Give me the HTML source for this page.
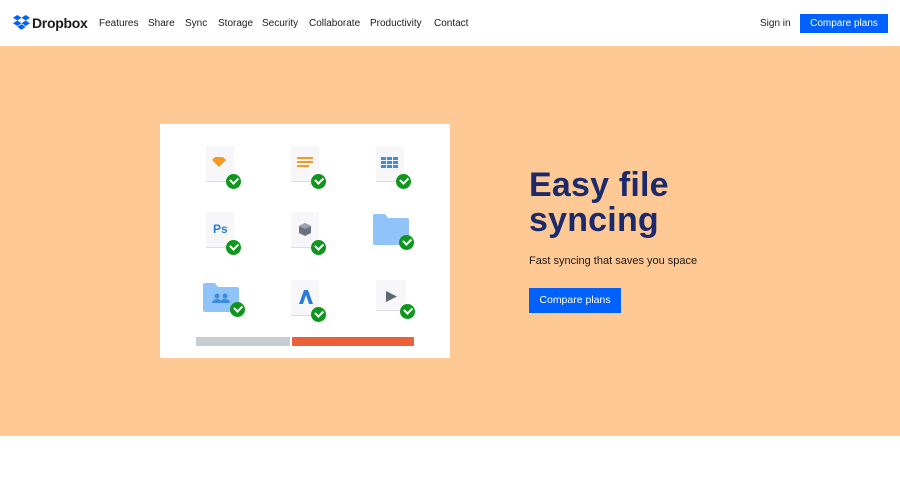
<!DOCTYPE html>
<html><head><style>
*{margin:0;padding:0;box-sizing:border-box}
body{width:900px;height:484px;background:#fff;font-family:"Liberation Sans",sans-serif;position:relative;overflow:hidden}
.nav{position:absolute;top:0;left:0;width:900px;height:46px;background:#fff}
.nav a{position:absolute;top:18px;font-size:10px;color:#1e1919}
.logo{position:absolute;left:13px;top:15px}
.brand{position:absolute;left:32px;top:15px;font-size:14px;font-weight:bold;color:#1e1919;letter-spacing:-0.3px}
.nbtn{position:absolute;left:800px;top:14px;width:88px;height:19px;background:#0061fe;color:#fff;font-size:10px;text-align:center;line-height:19px}
.hero{position:absolute;top:46px;left:0;width:900px;height:390px;background:#fec994}
.card{position:absolute;left:160px;top:124px;width:290px;height:234px;background:#fff}
.doc{position:absolute;width:28px;height:36px;background:#f7f7f9;border-bottom:1px solid #dcdde0}
.chk{position:absolute;width:15px;height:15px;border-radius:50%;background:#10951f}
.chk:after{content:"";position:absolute;left:4px;top:3px;width:6px;height:3.5px;border-left:2px solid #fff;border-bottom:2px solid #fff;transform:rotate(-45deg)}
h1{position:absolute;left:529px;top:168px;font-size:34px;line-height:35px;color:#1c2a6b;font-weight:bold;letter-spacing:0.2px}
.sub{position:absolute;left:529px;top:255px;font-size:11px;color:#1e1919}
.hbtn{position:absolute;left:529px;top:288px;width:92px;height:25px;background:#0061fe;color:#fff;font-size:10.5px;text-align:center;line-height:25px}
</style></head><body>
<div class="nav">
<svg class="logo" width="17" height="15" viewBox="0 0 17 15"><g fill="#0061fe"><path d="M4.3 0L0 2.8l4.3 2.7 4.2-2.7zM12.7 0L8.5 2.8l4.2 2.7L17 2.8zM0 8.2l4.3 2.8 4.2-2.8-4.2-2.7zM12.7 5.5L8.5 8.2l4.2 2.8L17 8.2zM4.3 11.9l4.2 2.8 4.2-2.8-4.2-2.7z"/></g></svg>
<div class="brand">Dropbox</div>
<a style="left:99px">Features</a><a style="left:148px">Share</a><a style="left:185px">Sync</a><a style="left:218px">Storage</a><a style="left:262px">Security</a><a style="left:309px">Collaborate</a><a style="left:370px">Productivity</a><a style="left:434px">Contact</a>
<a style="left:760px">Sign in</a>
<div class="nbtn">Compare plans</div>
</div>
<div class="hero"></div>
<div class="card"></div>
<div class="doc" style="left:206px;top:146px"></div>
<svg style="position:absolute;left:212px;top:157px" width="14" height="10"><path d="M3 0h8l3 3-7 7-7-7z" fill="#f79a22"/></svg>
<div class="doc" style="left:291px;top:146px"></div>
<svg style="position:absolute;left:297px;top:157px" width="16" height="12"><g fill="#f79a22"><rect y="0" width="16" height="2"/><rect y="4" width="16" height="2"/><rect y="8" width="12" height="2"/></g></svg>
<div class="doc" style="left:376px;top:146px"></div>
<svg style="position:absolute;left:381px;top:157px" width="18" height="12"><g fill="#3b8ddb"><rect x="0" y="0" width="5" height="3"/><rect x="6" y="0" width="5" height="3"/><rect x="12" y="0" width="5" height="3"/><rect x="0" y="4" width="5" height="3"/><rect x="6" y="4" width="5" height="3"/><rect x="12" y="4" width="5" height="3"/><rect x="0" y="8" width="5" height="3"/><rect x="6" y="8" width="5" height="3"/><rect x="12" y="8" width="5" height="3"/></g></svg>
<div class="chk" style="left:226px;top:174px"></div><div class="chk" style="left:311px;top:174px"></div><div class="chk" style="left:396px;top:174px"></div>
<div class="doc" style="left:206px;top:212px"></div>
<div style="position:absolute;left:213px;top:222px;font-size:12px;font-weight:bold;color:#2a7bd8">Ps</div>
<div class="doc" style="left:291px;top:212px"></div>
<svg style="position:absolute;left:299px;top:223px" width="12" height="13"><path d="M6 0l6 3v7l-6 3-6-3V3z" fill="#6b7280"/><path d="M6 0l6 3-6 3-6-3z" fill="#9ca3af"/></svg>
<svg style="position:absolute;left:373px;top:214px" width="36" height="31"><path d="M0 2a2 2 0 012-2h10l3 4h19a2 2 0 012 2v23a2 2 0 01-2 2H2a2 2 0 01-2-2z" fill="#90c4f9"/></svg>
<div class="chk" style="left:226px;top:240px"></div><div class="chk" style="left:311px;top:240px"></div><div class="chk" style="left:399px;top:235px"></div>
<svg style="position:absolute;left:203px;top:283px" width="36" height="29"><path d="M0 2a2 2 0 012-2h10l3 4h19a2 2 0 012 2v21a2 2 0 01-2 2H2a2 2 0 01-2-2z" fill="#90c4f9"/><g fill="#3b8ddb"><circle cx="14" cy="13" r="2.5"/><circle cx="22" cy="13" r="2.5"/><path d="M9 20a5 4 0 0110 0zM17 20a5 4 0 0110 0z"/></g></svg>
<div class="doc" style="left:291px;top:280px"></div>
<svg style="position:absolute;left:299px;top:290px" width="14" height="14"><path d="M5 0h4l5 14h-4L7 5 4 14H0z" fill="#2a7bd8"/></svg>
<div class="doc" style="left:376px;top:280px;width:30px;height:31px"></div>
<svg style="position:absolute;left:386px;top:291px" width="11" height="11"><path d="M0 0l11 5.5L0 11z" fill="#5f6775"/></svg>
<div class="chk" style="left:230px;top:302px"></div><div class="chk" style="left:311px;top:307px"></div><div class="chk" style="left:400px;top:304px"></div>
<div style="position:absolute;left:196px;top:337px;width:94px;height:9px;background:#c8ccd4"></div>
<div style="position:absolute;left:292px;top:337px;width:122px;height:9px;background:#ea6139;border-radius:1px"></div>
<h1>Easy file<br>syncing</h1>
<div class="sub">Fast syncing that saves you space</div>
<div class="hbtn">Compare plans</div>
</body></html>
